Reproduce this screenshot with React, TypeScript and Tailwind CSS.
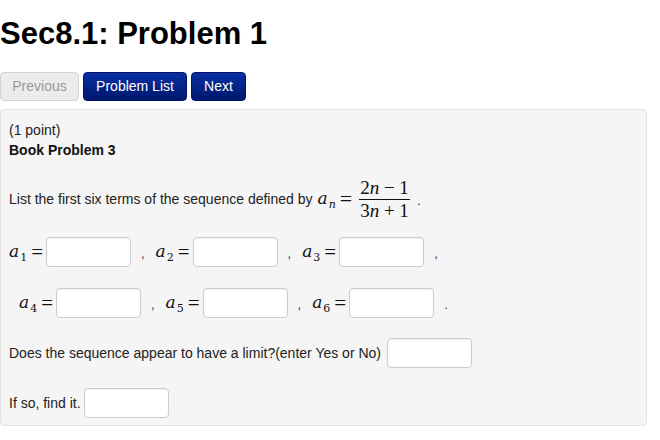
import React from "react";

const mathFont = { fontFamily: '"DejaVu Serif", "Liberation Serif", serif' };
const eqFont = { fontFamily: '"Liberation Serif", "DejaVu Serif", serif' };

function Sub({ base, sub, italicSub = false }: { base: string; sub: string; italicSub?: boolean }) {
  return (
    <span className="inline-flex items-baseline" style={mathFont}>
      <span className="italic text-[17px] text-[#111]">{base}</span>
      <span className={`text-[11px] text-[#111] relative top-[4px] ml-[1px] ${italicSub ? "italic" : ""}`}>{sub}</span>
    </span>
  );
}

function Field() {
  return <div className="w-[85px] h-[30px] bg-white border border-[#cccccc] rounded-[4px] shadow-[inset_0_1px_1px_rgba(0,0,0,0.06)]" />;
}

function Term({ n }: { n: string }) {
  return (
    <div className="flex items-center">
      <Sub base="a" sub={n} />
      <span className="text-[21px] text-[#111] ml-[4px] mr-[3px] leading-[20px]" style={eqFont}>=</span>
      <Field />
    </div>
  );
}

function Sep({ c }: { c: string }) {
  return <span className="text-[13px] text-[#333] ml-[10px] mr-[11px] relative top-[2px]">{c}</span>;
}

export default function App() {
  return (
    <div className="w-[660px] h-[440px] bg-white font-['Liberation_Sans',Arial,sans-serif] text-[#222] overflow-hidden">
      <h1 className="text-[31px] font-bold text-black leading-[34px] pt-[17px] pl-0">Sec8.1: Problem 1</h1>
      <div className="flex gap-[4px] mt-[21px]">
        <div className="h-[29px] w-[79px] justify-center flex items-center text-[14px] text-[#999] bg-[#ececec] border border-[#d4d4d4] rounded-[4px]">Previous</div>
        <div className="h-[29px] w-[104px] justify-center flex items-center text-[14px] text-white bg-gradient-to-b from-[#0b2fa3] to-[#00186e] border border-[#001466] rounded-[4px]">Problem List</div>
        <div className="h-[29px] w-[55px] justify-center flex items-center text-[14px] text-white bg-gradient-to-b from-[#0b2fa3] to-[#00186e] border border-[#001466] rounded-[4px]">Next</div>
      </div>
      <div className="mt-[8px] w-[647px] h-[317px] bg-[#f5f5f5] border border-[#e3e3e3] rounded-[4px] pl-[8px] pt-[10px] text-[14px] leading-[20px]">
        <div>(1 point)</div>
        <div className="font-bold text-[#111]">Book Problem 3</div>
        <div className="flex items-center mt-[18px] h-[42px]">
          <span>List the first six terms of the sequence defined by</span>
          <span className="ml-[5px] flex items-center">
            <Sub base="a" sub="n" italicSub />
            <span className="text-[22px] text-[#111] ml-[4px] mr-[7px] leading-[20px]" style={eqFont}>=</span>
            <span className="inline-flex flex-col items-center text-[19px] text-[#111] leading-[20px]" style={eqFont}>
              <span className="px-[1px] pb-[1px]">2<span className="italic">n</span> − 1</span>
              <span className="self-stretch h-[1px] bg-[#111]" />
              <span className="px-[1px] pt-[1px]">3<span className="italic">n</span> + 1</span>
            </span>
            <span className="text-[13px] ml-[7px] relative top-[2px]">.</span>
          </span>
        </div>
        <div className="flex items-center mt-[17px]">
          <Term n="1" />
          <Sep c="," />
          <Term n="2" />
          <Sep c="," />
          <Term n="3" />
          <Sep c="," />
        </div>
        <div className="flex items-center mt-[21px] pl-[10px]">
          <Term n="4" />
          <Sep c="," />
          <Term n="5" />
          <Sep c="," />
          <Term n="6" />
          <Sep c="." />
        </div>
        <div className="flex items-center mt-[20px]">
          <span className="mr-[6px]">Does the sequence appear to have a limit?(enter Yes or No)</span>
          <Field />
        </div>
        <div className="flex items-center mt-[20px]">
          <span className="mr-[3px]">If so, find it.</span>
          <Field />
        </div>
      </div>
    </div>
  );
}
